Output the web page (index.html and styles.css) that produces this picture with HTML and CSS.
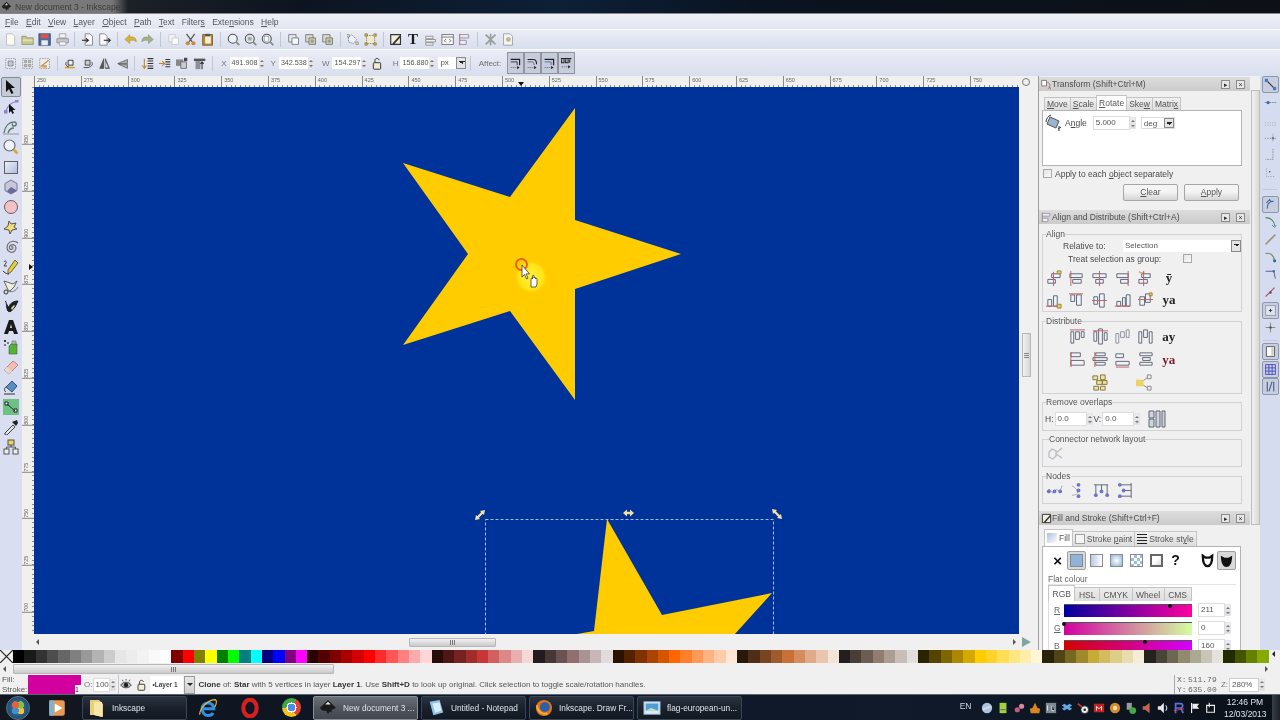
FILE: index.html
```html
<!DOCTYPE html>
<html lang="en">
<head>
  <meta charset="UTF-8">
  <title>New document 3 - Inkscape</title>
  <link rel="stylesheet" href="styles.css">
</head>
<body>
<svg class="defs" width="0" height="0">
  <!-- command bar -->
  <symbol id="new" viewBox="0 0 16 16"><path d="M3 1h7l3 3v11H3z" fill="#fbfaf4" stroke="#b9bab2"/></symbol>
  <symbol id="open" viewBox="0 0 16 16"><path d="M1 4h5l1 2h8v8H1z" fill="#c7c98c" stroke="#8d9160"/><path d="M2 8h12v2H2z" fill="#e2e3b5"/></symbol>
  <symbol id="save" viewBox="0 0 16 16"><rect x="1" y="1" width="14" height="14" fill="#4a6d9c" stroke="#2f4b72"/><rect x="3" y="1.500" width="10" height="5" fill="#d9534f"/><rect x="4" y="9" width="8" height="6" fill="#e9edf2"/></symbol>
  <symbol id="print" viewBox="0 0 16 16"><path d="M4 1h8v5H4z" fill="#f5f5f5" stroke="#999"/><path d="M1 7h14v5H1z" fill="#c6c9d2" stroke="#888"/><path d="M4 11h8v4H4z" fill="#fff" stroke="#999"/></symbol>
  <symbol id="imp" viewBox="0 0 16 16"><path d="M5 1h6l3 3v11H5z" fill="#fafafa" stroke="#777"/><path d="M1 9h7M6 6.500 9 9l-3 2.500" fill="none" stroke="#222" stroke-width="1.300"/></symbol>
  <symbol id="exp" viewBox="0 0 16 16"><path d="M2 1h6l3 3v11H2z" fill="#fafafa" stroke="#777"/><path d="M7 9h8M12.500 6.500 15 9l-2.500 2.500" fill="none" stroke="#222" stroke-width="1.300"/></symbol>
  <symbol id="undo" viewBox="0 0 16 16"><path d="M1 8l6-6v3h3c4 0 5 3 5 6-2-2-3-2-5-2H7v4z" fill="#d8b43a" stroke="#a08228" stroke-width=".6"/></symbol>
  <symbol id="redo" viewBox="0 0 16 16"><path d="M15 8L9 2v3H6C2 5 1 8 1 11c2-2 3-2 5-2h3v4z" fill="#a3b08a" stroke="#7e8a6a" stroke-width=".6"/></symbol>
  <symbol id="copy" viewBox="0 0 16 16"><path d="M2 2h8v9H2z" fill="#f4f5f8" stroke="#c3c5cc"/><path d="M6 6h8v8H6z" fill="#fafafa" stroke="#c3c5cc"/></symbol>
  <symbol id="cut" viewBox="0 0 16 16"><path d="M3 1l7 10M13 1L6 11" stroke="#55585c" stroke-width="1.500"/><circle cx="4.500" cy="12.500" r="2.500" fill="#c8893c"/><circle cx="11.500" cy="12.500" r="2.500" fill="#c8893c"/></symbol>
  <symbol id="paste" viewBox="0 0 16 16"><rect x="2" y="2" width="12" height="13" fill="#b78b3a" stroke="#70561f"/><rect x="5" y="4" width="7" height="9" fill="#f4efd8"/><rect x="5" y="1" width="6" height="3" fill="#555"/></symbol>
  <symbol id="zoom1" viewBox="0 0 16 16"><circle cx="7" cy="7" r="5.500" fill="#eef1f6" stroke="#4c4f57" stroke-width="1.300"/><path d="M11 11l4 4" stroke="#888c73" stroke-width="2"/></symbol>
  <symbol id="zoom2" viewBox="0 0 16 16"><circle cx="7" cy="7" r="5.500" fill="#dfe3e4" stroke="#4c4f57" stroke-width="1.300"/><circle cx="7" cy="7" r="2.500" fill="#a8a8a0"/><path d="M11 11l4 4" stroke="#888c73" stroke-width="2"/></symbol>
  <symbol id="zoom3" viewBox="0 0 16 16"><circle cx="7" cy="7" r="5.500" fill="#dfe3ea" stroke="#4c4f57" stroke-width="1.300"/><rect x="4" y="4" width="5" height="6" fill="#fff" stroke="#8a8fa0" stroke-width=".7"/><path d="M11 11l4 4" stroke="#888c73" stroke-width="2"/></symbol>
  <symbol id="dup" viewBox="0 0 16 16"><path d="M2 2h9v9H2z" fill="#e9ebf2" stroke="#6b6e75"/><path d="M6 6h8v8H6z" fill="#f6f7fa" stroke="#6b6e75"/></symbol>
  <symbol id="clone" viewBox="0 0 16 16"><path d="M2 2h9v9H2z" fill="#d9ddd0" stroke="#6b6e65"/><path d="M6 6h8v8H6z" fill="#cfd3bd" stroke="#6b6e65"/><path d="M8 8h4v4H8z" fill="#9da17f"/></symbol>
  <symbol id="group" viewBox="0 0 16 16"><path d="M3 5l4-3 6 6-4 5-6-2z" fill="#eef0f6" stroke="#7a7d88" stroke-dasharray="2 1"/><path d="M1 2h3v3H1zM12 11h3v3h-3z" fill="#e4e8c8" stroke="#6c6e5c" stroke-width=".7"/></symbol>
  <symbol id="ungroup" viewBox="0 0 16 16"><path d="M3 3h10v10H3z" fill="#efe9c7" stroke="#8b8560" stroke-dasharray="2 1"/><path d="M1 1h3v3H1zM12 12h3v3h-3zM12 1h3v3h-3zM1 12h3v3H1z" fill="#d5b64f" stroke="#74662d" stroke-width=".7"/></symbol>
  <symbol id="fillstroke" viewBox="0 0 16 16"><path d="M2 2h12v12H2z" fill="#f4efd9" stroke="#333" stroke-width="1.400"/><path d="M4 13L13 3l1.500 1.500L6 14z" fill="#333"/></symbol>
  <symbol id="layers" viewBox="0 0 16 16"><path d="M2 4h9v3H2zM2 8h12v3H2zM2 12h9v3H2z" fill="#eef0f6" stroke="#888"/></symbol>
  <symbol id="xml" viewBox="0 0 16 16"><rect x="1" y="2" width="14" height="12" fill="#f8f8f8" stroke="#666"/><path d="M1 5h14" stroke="#666"/><path d="M6 7.500L4 9.500l2 2M10 7.500l2 2-2 2" fill="none" stroke="#555"/></symbol>
  <symbol id="align" viewBox="0 0 16 16"><path d="M2 1v14" stroke="#c0687a" stroke-width="1.300"/><path d="M2 2h11v4H2zM2 9h8v5H2z" fill="#eceef5" stroke="#8a7f90"/></symbol>
  <symbol id="prefs" viewBox="0 0 16 16"><path d="M2 2l12 12M14 2L2 14M8 1v14" stroke="#9aa0a0" stroke-width="2.200"/></symbol>
  <symbol id="docprefs" viewBox="0 0 16 16"><path d="M3 1h8l3 3v11H3z" fill="#f5f5f2" stroke="#999"/><circle cx="9" cy="8" r="3" fill="#b8bb9c"/></symbol>
  <!-- control bar -->
  <symbol id="selall" viewBox="0 0 16 16"><path d="M2 2h12v12H2z" fill="#e9ecf6" stroke="#8e93a0" stroke-dasharray="2 1"/><path d="M5 5h6v6H5z" fill="#c5c9d6" stroke="#777"/></symbol>
  <symbol id="selall2" viewBox="0 0 16 16"><path d="M2 2h12v12H2z" fill="#eceef3" stroke="#8e93a0" stroke-dasharray="2 1"/><path d="M4 4h3v3H4zM9 4h3v3H9zM4 9h3v3H4zM9 9h3v3H9z" fill="#bbb" stroke="#777" stroke-width=".6"/></symbol>
  <symbol id="desel" viewBox="0 0 16 16"><path d="M2 2h12v12H2z" fill="#eee" stroke="#9a938a" stroke-dasharray="2 1"/><path d="M3 12l10-8" stroke="#c8884a" stroke-width="1.400"/><path d="M5 10h6v3H5z" fill="#d8a24e"/></symbol>
  <symbol id="rotl" viewBox="0 0 16 16"><path d="M5 4h6v6H5z" fill="#eee" stroke="#222"/><path d="M1 13h12" stroke="#d8a520" stroke-width="2"/><path d="M3 6c-2 3 0 6 3 6" fill="none" stroke="#222"/></symbol>
  <symbol id="rotr" viewBox="0 0 16 16"><path d="M5 4h6v6H5z" fill="#ccc" stroke="#333"/><path d="M13 6c2 3 0 6-3 6M3 13h7" fill="none" stroke="#333"/></symbol>
  <symbol id="fliph" viewBox="0 0 16 16"><path d="M7 2v12L2 14zM9 2v12l5 0z" fill="#555" stroke="#333" stroke-width=".6"/><path d="M9 5v8l3.500 0z" fill="#ddd"/></symbol>
  <symbol id="flipv" viewBox="0 0 16 16"><path d="M14 3v5L2 8zM14 9v5L3 9z" fill="#aaa" stroke="#444" stroke-width=".7"/></symbol>
  <symbol id="raise1" viewBox="0 0 16 16"><path d="M4 2v11M1.500 10.500 4 14l2.500-3.500" fill="none" stroke="#c08a20" stroke-width="1.300"/><path d="M8 2h7M8 5h7M8 8h7M8 11h7M8 14h7" stroke="#333" stroke-width="1.300"/></symbol>
  <symbol id="raise2" viewBox="0 0 16 16"><path d="M1 8h7M5 5l3 3-3 3" fill="none" stroke="#c08a20" stroke-width="1.300"/><path d="M9 3h6M9 6h6M9 9h6M9 12h6" stroke="#333" stroke-width="1.300"/></symbol>
  <symbol id="raise3" viewBox="0 0 16 16"><path d="M1 3h9v8H1z" fill="#888"/><path d="M7 6h7v8H7z" fill="#c8ccd6" stroke="#666"/><path d="M11 1h4v4h-4z" fill="#444"/></symbol>
  <symbol id="raise4" viewBox="0 0 16 16"><path d="M1 2h14v3H1z" fill="#555"/><path d="M3 5h6v10H3z" fill="#8c8f98"/><path d="M11 6v9M9 8.500l2-2.500 2 2.500" fill="none" stroke="#333" stroke-width="1.300"/></symbol>
  <symbol id="lock" viewBox="0 0 16 16"><rect x="4" y="7" width="9" height="8" rx="1" fill="#f2ecd0" stroke="#333" stroke-width="1.200"/><path d="M6 7V4c0-3 5-3 5 0" fill="none" stroke="#333" stroke-width="1.200"/></symbol>
  <symbol id="aff1" viewBox="0 0 16 16"><path d="M2 3h11v7" fill="none" stroke="#222" stroke-width="1.500"/><path d="M2 6h8v4" fill="none" stroke="#222" stroke-width="1"/><path d="M2 13h8" stroke="#666" stroke-dasharray="1.500 1"/><path d="M10 11l3 2-3 2z" fill="#222"/></symbol>
  <symbol id="aff2" viewBox="0 0 16 16"><path d="M2 3h7c3 0 4 2 4 6" fill="none" stroke="#222" stroke-width="1.300"/><path d="M2 6h5c2 0 3 1 3 4" fill="none" stroke="#555"/><path d="M2 13h8" stroke="#666" stroke-dasharray="1.500 1"/><path d="M10 11l3 2-3 2z" fill="#222"/></symbol>
  <symbol id="aff3" viewBox="0 0 16 16"><path d="M2 3h11v7" fill="none" stroke="#222" stroke-width="1.500"/><path d="M2 6h8v4" fill="none" stroke="#3b6b8f"/><path d="M2 13h8" stroke="#3b6b8f" stroke-dasharray="1.500 1"/><path d="M10 11l3 2-3 2z" fill="#222"/></symbol>
  <symbol id="aff4" viewBox="0 0 16 16"><path d="M1 2h13" stroke="#222" stroke-width="1.500"/><path d="M2 3v4h3V3M7 3v4h3V3M12 3v4" fill="none" stroke="#222" stroke-width="1.300"/><path d="M2 12h8" stroke="#666" stroke-dasharray="1.500 1"/><path d="M10 10l3 2-3 2z" fill="#222"/></symbol>
  <!-- toolbox -->
  <symbol id="t-sel" viewBox="0 0 16 16"><path d="M3 1v12l3-3 2.500 5 2-1-2.500-5h4z" fill="#111"/></symbol>
  <symbol id="t-node" viewBox="0 0 16 16"><path d="M3 12c2-6 5-8 11-10" fill="none" stroke="#8d84c8" stroke-width="1.300"/><rect x="1" y="11" width="3.500" height="3.500" fill="#8d84c8"/><rect x="12" y="1" width="3.500" height="2.500" fill="#8d84c8"/><path d="M6 5v9l2-2 1.500 3 1.500-1-1.500-3h3z" fill="#111"/></symbol>
  <symbol id="t-tweak" viewBox="0 0 16 16"><path d="M1 14c1-7 5-11 10-11 3 0 3 4 0 4-2 0-2-2-1-2M5 14c1-3 3-5 6-5" fill="none" stroke="#5e7a6c" stroke-width="1.400"/><path d="M0 15h16" stroke="#b6bac8" stroke-width="2"/></symbol>
  <symbol id="t-zoom" viewBox="0 0 16 16"><circle cx="6.500" cy="6.500" r="5.500" fill="#eef3fa" stroke="#666b75" stroke-width="1.200"/><path d="M10.500 10.500l4 4" stroke="#d8a93c" stroke-width="2.600"/></symbol>
  <symbol id="t-rect" viewBox="0 0 16 16"><defs><linearGradient id="gr" x1="0" y1="0" x2="1" y2="1"><stop offset="0" stop-color="#eef2fa"/><stop offset="1" stop-color="#aebbd8"/></linearGradient></defs><rect x="1.500" y="2.500" width="13" height="12" fill="url(#gr)" stroke="#5c6068"/></symbol>
  <symbol id="t-3d" viewBox="0 0 16 16"><path d="M8 1l6 3.500v7L8 15l-6-3.500v-7z" fill="#c9c7da" stroke="#77778c"/><path d="M8 8l6 3.500L8 15l-4-3z" fill="#6b6a9c"/></symbol>
  <symbol id="t-circ" viewBox="0 0 16 16"><circle cx="8" cy="8" r="6.500" fill="#f5c1c8" stroke="#6a5c60"/></symbol>
  <symbol id="t-star" viewBox="0 0 16 16"><path d="M6 2l2 3 5-1-2 4 3 2-5 1-2 4-1-4-5-1 4-3z" fill="#f3dc80" stroke="#55564a"/></symbol>
  <symbol id="t-spiral" viewBox="0 0 16 16"><path d="M8 8c1-1 2 0 2 1s-2 2-3 1-1-3 1-4 5 0 5 3-3 5-6 4-4-5-2-8 7-4 10-1" fill="none" stroke="#666" stroke-width="1.100"/></symbol>
  <symbol id="t-pencil" viewBox="0 0 16 16"><path d="M1 3c1-2 3-1 2 1L1 7h3" fill="none" stroke="#444"/><path d="M12 1l3 3-7 9-3 2 0-4z" fill="#e8d030" stroke="#333" stroke-width=".7"/><path d="M0 12c3 3 5 3 6 3" fill="none" stroke="#333"/></symbol>
  <symbol id="t-pen" viewBox="0 0 16 16"><path d="M1 2l9 3 4-3-3 6-4 4-2-1z" fill="#eef0da" stroke="#444" stroke-width=".8"/><circle cx="3" cy="13" r="2" fill="none" stroke="#333"/><path d="M5 12c4 2 8 0 10-4" fill="none" stroke="#777"/></symbol>
  <symbol id="t-callig" viewBox="0 0 16 16"><path d="M2 2c2 0 1 8 3 10 3 2 4-1 7-4l3-6c-4 0-8 2-9 6" fill="#1f2024" stroke="#1f2024"/><path d="M8 9l3-3 1 1-3 4z" fill="#e3dc8e"/></symbol>
  <symbol id="t-text" viewBox="0 0 16 16"><path d="M6 1h4l5 14h-4l-1-3H6l-1 3H1zm2 4l-1 4h2z" fill="#1a1a1a" fill-rule="evenodd"/></symbol>
  <symbol id="t-spray" viewBox="0 0 16 16"><path d="M8 5h6v10H6V7z" fill="#55b13a" stroke="#3b6a2a" stroke-width=".6"/><path d="M9 2h4v3H9z" fill="#bbb" stroke="#666" stroke-width=".6"/><circle cx="2" cy="2" r="1"/><circle cx="5" cy="4" r=".8"/><circle cx="2" cy="6" r=".8"/></symbol>
  <symbol id="t-erase" viewBox="0 0 16 16"><path d="M1 11L10 2l5 4-9 9z" fill="#f3bdb0" stroke="#b48a84"/><path d="M1 11l5 4 3-3-5-4z" fill="#ead6d0"/></symbol>
  <symbol id="t-bucket" viewBox="0 0 16 16"><path d="M3 8l6-6 5 5-5 6z" fill="#5b8fc2" stroke="#2f5273"/><path d="M1 15h11" stroke="#333"/><path d="M3 8c-2 1-2 4 0 5" fill="none" stroke="#333"/></symbol>
  <symbol id="t-grad" viewBox="0 0 16 16"><rect width="16" height="16" fill="#6fc083"/><path d="M2 3h3v3H2zM11 10h3v3h-3z" fill="#eef4ee" stroke="#223"/><path d="M4 5l8 7" stroke="#223"/></symbol>
  <symbol id="t-drop" viewBox="0 0 16 16"><path d="M2 14l8-8 2 2-8 8-2 0z" fill="#dfe2ec" stroke="#444"/><path d="M9 3l4 4 2-3-1-3z" fill="#222"/></symbol>
  <symbol id="t-conn" viewBox="0 0 16 16"><rect x="5" y="1" width="6" height="5" fill="#e8d36c" stroke="#55523a"/><rect x="1" y="10" width="5" height="5" fill="#eee" stroke="#555"/><rect x="10" y="10" width="5" height="5" fill="#eee" stroke="#555"/><path d="M3.500 10V8h9v2M8 6v2" fill="none" stroke="#555"/></symbol>
  <!-- dock -->
  <symbol id="dock-tr" viewBox="0 0 16 16"><path d="M1 2h7v8H1z" fill="#fff" stroke="#555"/><path d="M9 5c3 0 5 3 3 7M10 14l3-2 1 3" fill="none" stroke="#a05050"/></symbol>
  <symbol id="angle" viewBox="0 0 18 18"><path d="M5 3l9 4-3 7-9-4z" fill="#9bb2d0" stroke="#555"/><path d="M1 8c0-3 2-6 5-7M13 15l3-2M14 12v5" fill="none" stroke="#333"/></symbol>
  <symbol id="al-hl" viewBox="0 0 18 18"><path d="M3 10h8v4H3z" fill="#eef1f7" stroke="#5e6472"/><path d="M7 4h9v4H7z" fill="#eef1f7" stroke="#5e6472"/><path d="M9 2v15" stroke="#c45a66"/><path d="M13 1h4v3h-4z" fill="#e8d070" stroke="#9a7f30"/></symbol>
  <symbol id="al-hc" viewBox="0 0 18 18"><path d="M2 4h13v4H2zM5 10h9v4H5z" fill="#eef1f7" stroke="#5e6472"/><path d="M3 1v16" stroke="#c45a66"/></symbol>
  <symbol id="al-hm" viewBox="0 0 18 18"><path d="M2 4h14v4H2zM5 10h8v4H5z" fill="#eef1f7" stroke="#5e6472"/><path d="M9 1v16" stroke="#c45a66"/></symbol>
  <symbol id="al-hr" viewBox="0 0 18 18"><path d="M3 4h12v4H3zM7 10h8v4H7z" fill="#eef1f7" stroke="#5e6472"/><path d="M15 1v16" stroke="#c45a66"/></symbol>
  <symbol id="al-hy" viewBox="0 0 18 18"><path d="M2 10h9v4H2z" fill="#eef1f7" stroke="#5e6472"/><path d="M5 4h9v4H5z" fill="#eef1f7" stroke="#5e6472"/><path d="M3 1v2h5" fill="none" stroke="#c8953c"/><path d="M7 1v16" stroke="#c45a66"/></symbol>
  <symbol id="al-vb" viewBox="0 0 18 18"><path d="M3 8h4v7H3zM9 4h4v11H9z" fill="#eef1f7" stroke="#5e6472"/><path d="M1 15h15" stroke="#c45a66"/><path d="M13 13h4v4h-4z" fill="#e8d070" stroke="#9a7f30"/></symbol>
  <symbol id="al-vt" viewBox="0 0 18 18"><path d="M3 3h4v7H3zM9 3h5v11H9z" fill="#eef1f7" stroke="#5e6472"/><path d="M1 2h15" stroke="#c45a66"/></symbol>
  <symbol id="al-vm" viewBox="0 0 18 18"><path d="M3 5h4v8H3zM9 2h5v14H9z" fill="#eef1f7" stroke="#5e6472"/><path d="M1 9h16" stroke="#c45a66"/></symbol>
  <symbol id="al-vs" viewBox="0 0 18 18"><path d="M3 10h4v5H3zM9 6h3v9H9zM13 3h4v12h-4z" fill="#eef1f7" stroke="#5e6472"/><path d="M1 15h16" stroke="#c45a66"/></symbol>
  <symbol id="al-vy" viewBox="0 0 18 18"><path d="M3 5h5v9H3zM9 2h5v9H9z" fill="#eef1f7" stroke="#5e6472"/><path d="M1 8h16" stroke="#c45a66"/><path d="M13 1h3v3h-3z" fill="#e8d070" stroke="#9a7f30"/></symbol>
  <symbol id="di-1" viewBox="0 0 18 18"><path d="M2 4h3v12H2zM7 4h4v8H7zM13 4h3v6h-3z" fill="#f2f3f6" stroke="#5e6472"/><path d="M1 2h16" stroke="#c45a66"/></symbol>
  <symbol id="di-2" viewBox="0 0 18 18"><path d="M2 4h3v10H2zM7 1h4v16H7zM13 5h3v8h-3z" fill="#f2f3f6" stroke="#5e6472"/><path d="M1 3h16" stroke="#c45a66"/></symbol>
  <symbol id="di-3" viewBox="0 0 18 18"><path d="M2 6h3v10H2zM7 4h4v6H7zM13 2h3v8h-3z" fill="#f2f3f6" stroke="#8a8f9b"/></symbol>
  <symbol id="di-4" viewBox="0 0 18 18"><path d="M2 4h3v12H2zM7 2h4v8H7zM13 4h3v12h-3z" fill="#f2f3f6" stroke="#5e6472"/></symbol>
  <symbol id="di-5" viewBox="0 0 18 18"><path d="M2 2h10v4H2zM2 10h14v5H2z" fill="#f2f3f6" stroke="#5e6472"/><path d="M2 1v16" stroke="#c45a66"/></symbol>
  <symbol id="di-6" viewBox="0 0 18 18"><path d="M4 2h10v3H4zM1 7h15v3H1zM4 12h10v3H4z" fill="#f2f3f6" stroke="#5e6472"/><path d="M3 1v16" stroke="#c45a66"/></symbol>
  <symbol id="di-7" viewBox="0 0 18 18"><path d="M2 3h8v4H2zM2 11h14v4H2z" fill="#f2f3f6" stroke="#5e6472"/><path d="M2 17h14" stroke="#c45a66"/></symbol>
  <symbol id="di-8" viewBox="0 0 18 18"><path d="M3 2h13v3H3zM6 7h8v3H6zM3 12h13v3H3z" fill="#f2f3f6" stroke="#5e6472"/></symbol>
  <symbol id="di-9" viewBox="0 0 18 18"><path d="M2 2h5v4H2zM10 1h5v5h-5zM6 7h6v4H6zM12 7h5v4h-5zM3 13h5v4H3zM10 13h5v4h-5z" fill="#f0e2a0" stroke="#7f7640"/></symbol>
  <symbol id="di-10" viewBox="0 0 18 18"><path d="M1 6h8v7H1z" fill="#ecd262"/><path d="M9 7l5-4M9 12l5 3" stroke="#8a8a80"/><path d="M13 1h4v4h-4zM13 13h4v4h-4z" fill="#eee" stroke="#888"/></symbol>
  <symbol id="ovl" viewBox="0 0 18 18"><path d="M1 1h5v7H1zM1 9h5v8H1zM8 1h4v16H8zM14 1h3v16h-3z" fill="#cfd4e0" stroke="#5e6472"/></symbol>
  <symbol id="netw" viewBox="0 0 18 18"><path d="M3 7l3-3 4 2v5l-3 3-4-2zM10 8l6-5M10 9l6 4" fill="none" stroke="#bcbcc6" stroke-width="1.300"/></symbol>
  <symbol id="n1" viewBox="0 0 18 18"><path d="M1 10c4-7 5 6 8 0s5 5 8-6" fill="none" stroke="#999"/><circle cx="3" cy="10" r="2" fill="#6f76c8"/><circle cx="9" cy="10" r="2" fill="#6f76c8"/><circle cx="15" cy="10" r="2" fill="#6f76c8"/></symbol>
  <symbol id="n2" viewBox="0 0 18 18"><path d="M2 14c8 0 8-6 0-10" fill="none" stroke="#aaa"/><circle cx="9" cy="3" r="2" fill="#6f76c8"/><circle cx="9" cy="9" r="2" fill="#6f76c8"/><circle cx="9" cy="15" r="2" fill="#6f76c8"/></symbol>
  <symbol id="n3" viewBox="0 0 18 18"><path d="M1 3h15M3 3v11M9 3v7M15 3v11" fill="none" stroke="#5e6472"/><circle cx="3" cy="14" r="2" fill="#6f76c8"/><circle cx="9" cy="10" r="2" fill="#6f76c8"/><circle cx="15" cy="14" r="2" fill="#6f76c8"/></symbol>
  <symbol id="n4" viewBox="0 0 18 18"><path d="M15 1v16M3 3h12M7 9h8M3 15h12" fill="none" stroke="#5e6472"/><circle cx="3" cy="3" r="2" fill="#6f76c8"/><circle cx="7" cy="9" r="2" fill="#6f76c8"/><circle cx="3" cy="15" r="2" fill="#6f76c8"/></symbol>
  <!-- snap bar -->
  <symbol id="s1" viewBox="0 0 16 16"><path d="M3 3l10 10" stroke="#333" stroke-width="1.400"/><rect x="1" y="1" width="4" height="4" fill="#4a79b8"/><rect x="11" y="11" width="4" height="4" fill="#4a79b8"/></symbol>
  <symbol id="s2" viewBox="0 0 16 16"><path d="M1 8h14" stroke="#777" stroke-dasharray="2 1"/><circle cx="5" cy="8" r="2" fill="#3a68a8"/></symbol>
  <symbol id="s3" viewBox="0 0 16 16"><path d="M1 12h14M1 15h14" stroke="#aaa" stroke-dasharray="1.500 1.500"/></symbol>
  <symbol id="s4" viewBox="0 0 16 16"><path d="M1 9h14" stroke="#777" stroke-dasharray="1.500 1.500"/><path d="M11 3v10" stroke="#aaa"/><circle cx="11" cy="9" r="1.500" fill="#5a7ab8"/></symbol>
  <symbol id="s5" viewBox="0 0 16 16"><path d="M11 1v13H2" fill="none" stroke="#888" stroke-dasharray="2 1"/></symbol>
  <symbol id="s6" viewBox="0 0 16 16"><path d="M3 3v10h10" fill="none" stroke="#999" stroke-dasharray="1.500 1.500"/><circle cx="7" cy="7" r="1" fill="#444"/></symbol>
  <symbol id="s7" viewBox="0 0 16 16"><path d="M4 13c0-6 3-9 8-9M3 6l4-4 2 3" fill="none" stroke="#3a68a8" stroke-width="1.400"/></symbol>
  <symbol id="s8" viewBox="0 0 16 16"><path d="M2 2c6 0 11 4 11 10" fill="none" stroke="#4a8a50" stroke-width="1.300"/><path d="M10 11l3 3 2-3" fill="none" stroke="#3a68a8"/></symbol>
  <symbol id="s9" viewBox="0 0 16 16"><path d="M2 14L14 2" stroke="#9a9a7a" stroke-width="2"/></symbol>
  <symbol id="s10" viewBox="0 0 16 16"><path d="M2 3c6-1 10 2 11 9" fill="none" stroke="#5a8a50" stroke-width="1.400"/><circle cx="13" cy="12" r="2" fill="#3a68a8"/></symbol>
  <symbol id="s11" viewBox="0 0 16 16"><path d="M2 4h10l2 9" fill="none" stroke="#447"/><circle cx="12" cy="4" r="1.500" fill="#3a68a8"/></symbol>
  <symbol id="s12" viewBox="0 0 16 16"><path d="M2 13L13 2" stroke="#b06060" stroke-width="1.600"/><circle cx="8" cy="8" r="1.500" fill="#555"/></symbol>
  <symbol id="s13" viewBox="0 0 16 16"><rect x="2" y="2" width="12" height="12" fill="#dde3f0" stroke="#8e96a8"/><path d="M8 6v4M6 8h4" stroke="#222"/></symbol>
  <symbol id="s14" viewBox="0 0 16 16"><path d="M2 8h12M8 2v12" stroke="#777"/><circle cx="8" cy="8" r="1.500" fill="#555"/></symbol>
  <symbol id="s15" viewBox="0 0 16 16"><path d="M3 2h10v12H3z" fill="#fff" stroke="#444"/><path d="M9 3h3v10H9z" fill="#ccc"/></symbol>
  <symbol id="s16" viewBox="0 0 16 16"><path d="M2 2h12v12H2zM2 6h12M2 10h12M6 2v12M10 2v12" fill="none" stroke="#3a3ac0"/></symbol>
  <symbol id="s17" viewBox="0 0 16 16"><path d="M4 2v12M12 2v12M6 14L10 2" fill="none" stroke="#445a80" stroke-width="1.300"/></symbol>
</svg>

<div class="app">
  <div class="titlebar">
    <svg class="title-ico" viewBox="0 0 16 16"><path d="M8 1l7 7-4 2v3l-2-1-1 2-2-3H3L1 8z" fill="#222"/><path d="M6 6l2-3 2 3z" fill="#ddd"/></svg>
    <span>New document 3 - Inkscape</span>
  </div>

  <div class="menubar">
    <span><u>F</u>ile</span><span><u>E</u>dit</span><span><u>V</u>iew</span><span><u>L</u>ayer</span><span><u>O</u>bject</span><span><u>P</u>ath</span><span><u>T</u>ext</span><span>Filter<u>s</u></span><span>Exte<u>n</u>sions</span><span><u>H</u>elp</span>
  </div>

  <div class="cmdbar">
    <svg class="ic"><use href="#new"/></svg><svg class="ic"><use href="#open"/></svg><svg class="ic"><use href="#save"/></svg><svg class="ic"><use href="#print"/></svg>
    <i class="sep"></i>
    <svg class="ic"><use href="#imp"/></svg><svg class="ic"><use href="#exp"/></svg>
    <i class="sep"></i>
    <svg class="ic"><use href="#undo"/></svg><svg class="ic"><use href="#redo"/></svg>
    <i class="sep"></i>
    <svg class="ic"><use href="#copy"/></svg><svg class="ic"><use href="#cut"/></svg><svg class="ic"><use href="#paste"/></svg>
    <i class="sep"></i>
    <svg class="ic"><use href="#zoom1"/></svg><svg class="ic"><use href="#zoom2"/></svg><svg class="ic"><use href="#zoom3"/></svg>
    <i class="sep"></i>
    <svg class="ic"><use href="#dup"/></svg><svg class="ic"><use href="#clone"/></svg><svg class="ic"><use href="#clone"/></svg>
    <i class="sep"></i>
    <svg class="ic"><use href="#group"/></svg><svg class="ic"><use href="#ungroup"/></svg>
    <i class="sep"></i>
    <svg class="ic"><use href="#fillstroke"/></svg><span class="big-t">T</span><svg class="ic"><use href="#layers"/></svg><svg class="ic"><use href="#xml"/></svg><svg class="ic"><use href="#align"/></svg>
    <i class="sep"></i>
    <svg class="ic"><use href="#prefs"/></svg><svg class="ic"><use href="#docprefs"/></svg>
  </div>

  <div class="ctrlbar">
    <svg class="ic"><use href="#selall"/></svg><svg class="ic"><use href="#selall2"/></svg><svg class="ic"><use href="#desel"/></svg>
    <i class="sep"></i>
    <svg class="ic"><use href="#rotl"/></svg><svg class="ic"><use href="#rotr"/></svg><svg class="ic"><use href="#fliph"/></svg><svg class="ic"><use href="#flipv"/></svg>
    <i class="sep"></i>
    <svg class="ic"><use href="#raise1"/></svg><svg class="ic"><use href="#raise2"/></svg><svg class="ic"><use href="#raise3"/></svg><svg class="ic"><use href="#raise4"/></svg>
    <i class="sep"></i>
    <label class="coord x-label">X</label><span class="num w30">491.908</span><span class="spin"></span>
    <label class="coord y-label">Y</label><span class="num w30">342.538</span><span class="spin"></span>
    <label class="coord w-label">W</label><span class="num w30">154.297</span><span class="spin"></span>
    <svg class="ic lock"><use href="#lock"/></svg>
    <label class="coord h-label">H</label><span class="num w30">156.880</span><span class="spin"></span>
    <span class="select px"><em>px</em><b class="arrow"></b></span>
    <i class="sep"></i>
    <span class="affect">Affect:</span>
    <span class="toggle"><svg class="ic"><use href="#aff1"/></svg></span><span class="toggle"><svg class="ic"><use href="#aff2"/></svg></span><span class="toggle"><svg class="ic"><use href="#aff3"/></svg></span><span class="toggle"><svg class="ic"><use href="#aff4"/></svg></span>
  </div>

  <div class="main">
    <div class="tools">
      <span class="tool active"><svg><use href="#t-sel"/></svg></span>
      <span class="tool"><svg><use href="#t-node"/></svg></span>
      <span class="tool"><svg><use href="#t-tweak"/></svg></span>
      <span class="tool"><svg><use href="#t-zoom"/></svg></span>
      <span class="tool"><svg><use href="#t-rect"/></svg></span>
      <span class="tool"><svg><use href="#t-3d"/></svg></span>
      <span class="tool"><svg><use href="#t-circ"/></svg></span>
      <span class="tool"><svg><use href="#t-star"/></svg></span>
      <span class="tool"><svg><use href="#t-spiral"/></svg></span>
      <span class="tool"><svg><use href="#t-pencil"/></svg></span>
      <span class="tool"><svg><use href="#t-pen"/></svg></span>
      <span class="tool"><svg><use href="#t-callig"/></svg></span>
      <span class="tool"><svg><use href="#t-text"/></svg></span>
      <span class="tool"><svg><use href="#t-spray"/></svg></span>
      <span class="tool"><svg><use href="#t-erase"/></svg></span>
      <span class="tool"><svg><use href="#t-bucket"/></svg></span>
      <span class="tool"><svg><use href="#t-grad"/></svg></span>
      <span class="tool"><svg><use href="#t-drop"/></svg></span>
      <span class="tool"><svg><use href="#t-conn"/></svg></span>
    </div>

    <div class="workspace">
      <div class="corner"></div>
      <div class="ruler-h">
        <span>250</span><span>275</span><span>300</span><span>325</span><span>350</span><span>375</span><span>400</span><span>425</span><span>450</span><span>475</span><span>500</span><span>525</span><span>550</span><span>575</span><span>600</span><span>625</span><span>650</span><span>675</span><span>700</span><span>725</span><span>750</span>
        <i class="mark-h"></i>
      </div>
      <div class="vscroll-top"><b></b></div>
      <div class="ruler-v">
        <span>950</span><span>925</span><span>900</span><span>875</span><span>850</span><span>825</span><span>800</span><span>775</span><span>750</span><span>725</span><span>700</span>
        <i class="mark-v"></i>
      </div>
      <div class="canvas">
        <svg class="page" viewBox="34 87 985 547" width="985" height="547">
          <defs>
            <radialGradient id="glow"><stop offset="0" stop-color="#fff23c"/><stop offset=".75" stop-color="#ffe619" stop-opacity=".9"/><stop offset="1" stop-color="#ffcc00" stop-opacity="0"/></radialGradient>
          </defs>
          <polygon fill="#ffcc00" points="575,108 575,220 681,254 575,289 575,400 510,311 403,345 468,254 403,163 510,197"/>
          <polygon fill="#ffcc00" points="607,519 662,615 772,593 725,645 560,645 560,637 594,631"/>
          <rect x="485.500" y="519.500" width="288" height="130" fill="none" stroke="#a9bcdf" stroke-dasharray="3 2"/>
          <g fill="none" stroke="#f5e0a4" stroke-width="2.400">
            <path d="M477 518l6-6"/>
            <path d="M625 513h7"/>
            <path d="M774 511l6 6"/>
          </g>
          <g fill="#f5e0a4">
            <path d="M475 520l1-5 4 4zM485 510l-5 1 4 4z"/>
            <path d="M623 513l4-3.500v7zM634 513l-4-3.500v7z"/>
            <path d="M772 509l5 1-4 4zM782 519l-1-5-4 4z"/>
          </g>
          <circle cx="531" cy="277" r="17" fill="url(#glow)"/>
          <circle cx="521.500" cy="264.500" r="5.500" fill="none" stroke="#e2631a" stroke-width="2"/>
          <path d="M522 265v12l2.500-2.500 2 4.500 1.500-.8-2-4.300h3.500z" fill="#fff" stroke="#222" stroke-width=".7"/>
          <path d="M531 284v-5c0-1 1.500-1 1.500 0v-3c0-1 1.500-1 1.500 0v2c0-1 1.500-1 1.500 0v1c0-1 1.500-1 1.500 0v5l-1 3h-5z" fill="#fff" stroke="#222" stroke-width=".7"/>
        </svg>
      </div>
      <div class="vscroll"><b></b></div>
      <div class="hscroll-corner"></div>
      <div class="hscroll">
        <i class="arr-l"></i><b class="thumb"><em></em></b><i class="arr-r"></i>
      </div>
      <div class="cms"><svg viewBox="0 0 12 12"><path d="M2 1l9 5-9 5z" fill="#7fa6a0"/></svg></div>
    </div>

    <div class="dock">
      <div class="dock-inner">
        <div class="dock-head"><svg class="head-ic"><use href="#dock-tr"/></svg><span>Transform (Shift+Ctrl+M)</span><i class="hbtn">▸</i><i class="hbtn">×</i></div>
        <div class="tabs tr-tabs"><span><u>M</u>ove</span><span><u>S</u>cale</span><span class="on"><u>R</u>otate</span><span>Ske<u>w</u></span><span>Matri<u>x</u></span></div>
        <div class="note tr-note">
          <div class="row"><svg class="dic"><use href="#angle"/></svg><span class="lbl">A<u>n</u>gle</span><span class="num w36">5.000</span><span class="spin"></span><span class="select deg"><em>deg</em><b class="arrow"></b></span></div>
        </div>
        <div class="check-row"><i class="check"></i><span>Apply to each <u>o</u>bject separately</span></div>
        <div class="btn-row"><span class="btn"><u>C</u>lear</span><span class="btn"><u>A</u>pply</span></div>

        <div class="dock-head head-2"><svg class="head-ic"><use href="#align"/></svg><span>Align and Distribute (Shift+Ctrl+A)</span><i class="hbtn">▸</i><i class="hbtn">×</i></div>
        <fieldset class="frame f-align">
          <legend>Align</legend>
          <div class="rel-row"><span>Relative to:</span><span class="select rel"><em>Selection</em><b class="arrow"></b></span></div>
          <div class="treat-row"><span>Treat selection as group:</span><i class="check"></i></div>
          <div class="grid6">
            <svg><use href="#al-hl"/></svg><svg><use href="#al-hc"/></svg><svg><use href="#al-hm"/></svg><svg><use href="#al-hr"/></svg><svg><use href="#al-hy"/></svg><b class="gly">ȳ</b>
            <svg><use href="#al-vb"/></svg><svg><use href="#al-vt"/></svg><svg><use href="#al-vm"/></svg><svg><use href="#al-vs"/></svg><svg><use href="#al-vy"/></svg><b class="gly">ya</b>
          </div>
        </fieldset>
        <fieldset class="frame f-dist">
          <legend>Distribute</legend>
          <div class="grid5">
            <svg><use href="#di-1"/></svg><svg><use href="#di-2"/></svg><svg><use href="#di-3"/></svg><svg><use href="#di-4"/></svg><b class="gly">ay</b>
            <svg><use href="#di-5"/></svg><svg><use href="#di-6"/></svg><svg><use href="#di-7"/></svg><svg><use href="#di-8"/></svg><b class="gly red">ya</b>
          </div>
          <div class="dist-last"><svg><use href="#di-9"/></svg><svg><use href="#di-10"/></svg></div>
        </fieldset>
        <fieldset class="frame f-over">
          <legend>Remove overlaps</legend>
          <div class="row ovl-row"><span>H:</span><span class="num w30">0.0</span><span class="spin"></span><span>V:</span><span class="num w30">0.0</span><span class="spin"></span><svg class="dic"><use href="#ovl"/></svg></div>
        </fieldset>
        <fieldset class="frame f-conn">
          <legend>Connector network layout</legend>
          <svg class="dic"><use href="#netw"/></svg>
        </fieldset>
        <fieldset class="frame f-nodes">
          <legend>Nodes</legend>
          <div class="node-row"><svg><use href="#n1"/></svg><svg><use href="#n2"/></svg><svg><use href="#n3"/></svg><svg><use href="#n4"/></svg></div>
        </fieldset>

        <div class="dock-head head-3"><svg class="head-ic"><use href="#fillstroke"/></svg><span>Fill and Stroke (Shift+Ctrl+F)</span><i class="hbtn">▸</i><i class="hbtn">×</i></div>
        <div class="tabs fs-tabs">
          <span class="on"><i class="mini fill"></i><em>Fill</em></span><span><i class="mini stroke"></i><em>Stroke <u>p</u>aint</em></span><span><i class="mini style"></i><em>Stroke st<u>y</u>le</em></span>
        </div>
        <div class="note fs-note">
          <div class="paint-row">
            <span class="p-none">×</span>
            <span class="pt sel"><i class="p-flat"></i></span>
            <span class="pt"><i class="p-lin"></i></span>
            <span class="pt"><i class="p-rad"></i></span>
            <span class="pt"><i class="p-pat"></i></span>
            <span class="pt"><i class="p-swatch"></i></span>
            <span class="p-q">?</span>
            <span class="rule-ic"><svg viewBox="0 0 16 16"><path d="M3 3c0 9 2 11 5 11s5-2 5-11l-3 2H6z" fill="none" stroke="#111" stroke-width="2.500"/></svg></span>
            <span class="rule-ic sel"><svg viewBox="0 0 16 16"><path d="M2 3c0 9 3 12 6 12s6-3 6-12l-4 2H6z" fill="#111"/></svg></span>
          </div>
          <div class="flat-title">Flat colour</div>
          <div class="tabs color-tabs"><span class="on">RGB</span><span>HSL</span><span>CMYK</span><span>Wheel</span><span>CMS</span></div>
          <div class="slider-row"><u>R</u><span class="slider s-r"><i style="left:83%"></i></span><span class="num w26">211</span><span class="spin"></span></div>
          <div class="slider-row"><u>G</u><span class="slider s-g"><i style="left:0"></i></span><span class="num w26">0</span><span class="spin"></span></div>
          <div class="slider-row"><u>B</u><span class="slider s-b"><i style="left:63%"></i></span><span class="num w26">160</span><span class="spin"></span></div>
        </div>
      </div>
      <div class="dock-scroll"><b></b></div>
    </div>

    <div class="snapbar">
      <span class="snap on"><svg><use href="#s1"/></svg></span>
      <span class="snap"><svg><use href="#s2"/></svg></span>
      <span class="snap"><svg><use href="#s3"/></svg></span>
      <span class="snap"><svg><use href="#s4"/></svg></span>
      <span class="snap"><svg><use href="#s5"/></svg></span>
      <span class="snap"><svg><use href="#s6"/></svg></span>
      <i class="snap-sep wide"></i>
      <span class="snap on"><svg><use href="#s7"/></svg></span>
      <span class="snap"><svg><use href="#s8"/></svg></span>
      <span class="snap"><svg><use href="#s9"/></svg></span>
      <span class="snap"><svg><use href="#s10"/></svg></span>
      <span class="snap"><svg><use href="#s11"/></svg></span>
      <span class="snap"><svg><use href="#s12"/></svg></span>
      <span class="snap on"><svg><use href="#s13"/></svg></span>
      <span class="snap"><svg><use href="#s14"/></svg></span>
      <i class="snap-sep"></i>
      <span class="snap on"><svg><use href="#s15"/></svg></span>
      <span class="snap on"><svg><use href="#s16"/></svg></span>
      <span class="snap on"><svg><use href="#s17"/></svg></span>
    </div>
  </div>

  <div class="palette">
    <span class="no-paint"><svg viewBox="0 0 13 13"><path d="M0 0l13 13M13 0L0 13" stroke="#222" stroke-width="1.200"/></svg></span>
    <div class="swatches">
      <i style="background:#000"></i><i style="background:#1a1a1a"></i><i style="background:#333"></i><i style="background:#4d4d4d"></i><i style="background:#666"></i><i style="background:#808080"></i><i style="background:#999"></i><i style="background:#b3b3b3"></i><i style="background:#ccc"></i><i style="background:#e6e6e6"></i><i style="background:#ececec"></i><i style="background:#f2f2f2"></i><i style="background:#f9f9f9"></i><i style="background:#fff"></i>
      <i style="background:#800000"></i><i style="background:#f00"></i><i style="background:#808000"></i><i style="background:#ff0"></i><i style="background:#008000"></i><i style="background:#0f0"></i><i style="background:#008080"></i><i style="background:#0ff"></i><i style="background:#000080"></i><i style="background:#00f"></i><i style="background:#800080"></i><i style="background:#f0f"></i>
      <i style="background:#2b0000"></i><i style="background:#500"></i><i style="background:#800000"></i><i style="background:#a00"></i><i style="background:#d40000"></i><i style="background:#f00"></i><i style="background:#ff2a2a"></i><i style="background:#f55"></i><i style="background:#ff8080"></i><i style="background:#faa"></i><i style="background:#ffd5d5"></i>
      <i style="background:#280b0b"></i><i style="background:#501616"></i><i style="background:#782121"></i><i style="background:#a02c2c"></i><i style="background:#c83737"></i><i style="background:#d35f5f"></i><i style="background:#de8787"></i><i style="background:#e9afaf"></i><i style="background:#f4d7d7"></i>
      <i style="background:#241c1c"></i><i style="background:#483737"></i><i style="background:#6c5353"></i><i style="background:#916f6f"></i><i style="background:#ac9393"></i><i style="background:#c8b7b7"></i><i style="background:#e3dbdb"></i>
      <i style="background:#2b1100"></i><i style="background:#520"></i><i style="background:#803300"></i><i style="background:#a40"></i><i style="background:#d45500"></i><i style="background:#f60"></i><i style="background:#ff7f2a"></i><i style="background:#f95"></i><i style="background:#ffb380"></i><i style="background:#fca"></i><i style="background:#ffe6d5"></i>
      <i style="background:#28170b"></i><i style="background:#502d16"></i><i style="background:#784421"></i><i style="background:#a05a2c"></i><i style="background:#c87137"></i><i style="background:#d38d5f"></i><i style="background:#deaa87"></i><i style="background:#e9c6af"></i><i style="background:#f4e3d7"></i>
      <i style="background:#241f1c"></i><i style="background:#483e37"></i><i style="background:#6c5d53"></i><i style="background:#917c6f"></i><i style="background:#ac9d93"></i><i style="background:#c8beb7"></i><i style="background:#e3dedb"></i>
      <i style="background:#2b2200"></i><i style="background:#540"></i><i style="background:#806600"></i><i style="background:#a80"></i><i style="background:#d4aa00"></i><i style="background:#fc0"></i><i style="background:#ffd42a"></i><i style="background:#fd5"></i><i style="background:#ffe680"></i><i style="background:#fea"></i><i style="background:#fff6d5"></i>
      <i style="background:#28220b"></i><i style="background:#504416"></i><i style="background:#786721"></i><i style="background:#a0892c"></i><i style="background:#c8ab37"></i><i style="background:#d3bc5f"></i><i style="background:#decd87"></i><i style="background:#e9ddaf"></i><i style="background:#f4eed7"></i>
      <i style="background:#24221c"></i><i style="background:#484537"></i><i style="background:#6c6753"></i><i style="background:#918a6f"></i><i style="background:#aca793"></i><i style="background:#c8c4b7"></i><i style="background:#e3e2db"></i>
      <i style="background:#222b00"></i><i style="background:#450"></i><i style="background:#668000"></i><i style="background:#8a0"></i>
    </div>
    <i class="pal-arrow"></i>
  </div>
  <div class="pal-scroll"><i class="arr-l"></i><b class="thumb"><em></em></b><i class="arr-r"></i></div>

  <div class="status">
    <div class="fs-labels"><span>Fill:</span><span>Stroke:</span></div>
    <div class="fs-swatch"><i class="sw-fill"></i><div class="sw-stroke"><i></i><span>1</span></div></div>
    <span class="op">O:</span><span class="num w18">100</span><span class="spin"></span>
    <i class="sep tall"></i>
    <svg class="st-ic" viewBox="0 0 16 16"><path d="M1 8c3-5 11-5 14 0-3 5-11 5-14 0z" fill="#bbb" stroke="#222"/><circle cx="8" cy="8" r="3" fill="#222"/><path d="M4 3L3 1M8 2V0M12 3l1-2" stroke="#222"/></svg>
    <svg class="st-ic" viewBox="0 0 16 16"><use href="#lock"/></svg>
    <span class="layer">•Layer 1</span><b class="layer-arrow"><s></s></b>
    <p class="msg"><b>Clone</b> of: <b>Star</b> with 5 vertices in layer <b>Layer 1</b>. Use <b>Shift+D</b> to look up original. Click selection to toggle scale/rotation handles.</p>
    <div class="coords"><span>X:</span><span class="cv">511.79</span><span>Y:</span><span class="cv">635.00</span></div>
    <span class="zlabel">Z:</span><span class="num w28">280%</span><span class="spin"></span>
  </div>

  <div class="taskbar">
    <span class="orb"></span>
    <span class="quick media"><svg viewBox="0 0 18 18"><rect x="2" y="2" width="14" height="14" rx="2" fill="#e79a55"/><rect x="2" y="2" width="4" height="14" fill="#7fb0d0"/><path d="M7 5l7 4-7 4z" fill="#fff"/></svg></span>
    <span class="task group"><svg viewBox="0 0 18 22"><path d="M2 3h9l4 4v13l-9-2H2z" fill="#e8cf7a"/><path d="M6 5h8v15l-8-2z" fill="#f6e7a8"/></svg>Inkscape</span>
    <span class="quick ie"><svg viewBox="0 0 24 24"><path d="M5 13h14c0-4-3-7-7-7s-7 3-7 7 3 8 7 8c3 0 5-1 6-3" fill="none" stroke="#2f8fe0" stroke-width="3.600"/><path d="M2 20C2 12 12 2 21 2c2 1 1 6-1 9" fill="none" stroke="#e8b92f" stroke-width="1.400"/></svg></span>
    <span class="quick opera"><svg viewBox="0 0 24 24"><ellipse cx="12" cy="12" rx="8" ry="10" fill="none" stroke="#d6201f" stroke-width="5"/></svg></span>
    <span class="quick chrome"><i></i></span>
    <span class="task active"><svg viewBox="0 0 20 20"><path d="M10 1l9 9-5 2v3l-2-1-2 3-2-4H4L1 10z" fill="#1a1a1a"/><path d="M7 6l3-3 3 3z" fill="#eee"/></svg>New document 3 ...</span>
    <span class="task"><svg viewBox="0 0 20 20"><path d="M3 3l11-2 4 14-11 3z" fill="#8fc4e6"/><path d="M6 5l8-1 2 9-7 2z" fill="#d9eef9"/></svg>Untitled - Notepad</span>
    <span class="task"><svg viewBox="0 0 20 20"><circle cx="10" cy="10" r="9" fill="#e2711d"/><circle cx="11" cy="9" r="5.500" fill="#2d5fa8"/><path d="M2 7c1 7 6 11 12 9" fill="none" stroke="#f4b23a" stroke-width="2"/></svg>Inkscape. Draw Fr...</span>
    <span class="task"><svg viewBox="0 0 20 20"><rect x="1" y="3" width="18" height="14" fill="#dfe9f2" stroke="#7fa5c4"/><rect x="3" y="5" width="14" height="8" fill="#4f9dd4"/><path d="M3 13l6-3 8 3z" fill="#cfe3c0"/></svg>flag-european-un...</span>
    <div class="tray">
      <span class="lang">EN</span>
      <svg viewBox="0 0 14 14"><circle cx="7" cy="7" r="6" fill="#a9c4e4"/><path d="M2 9l10-4" stroke="#ddd" stroke-width="2"/></svg>
      <svg viewBox="0 0 14 14"><rect x="3" y="1" width="8" height="12" fill="#a6cf3e"/><path d="M4 9h6" stroke="#456"/></svg>
      <svg viewBox="0 0 14 14"><circle cx="5" cy="9" r="3" fill="#c25a78"/><circle cx="10" cy="5" r="3" fill="#d88aa0"/></svg>
      <svg viewBox="0 0 14 14"><path d="M7 1l3 6 3 1-1 5H2L1 8l3-1z" fill="#d9861f"/></svg>
      <svg viewBox="0 0 14 14"><rect x="1" y="1" width="12" height="12" fill="#7d8a94"/><path d="M3 4v6M8 4v6h3" stroke="#eee"/></svg>
      <svg viewBox="0 0 14 14"><path d="M1 4l3-2 3 2 3-2 3 2-3 2 3 2-3 2-3-2-3 2-3-2 3-2z" fill="#5ea9e6"/></svg>
      <svg viewBox="0 0 14 14"><circle cx="9" cy="9" r="4.500" fill="#eee" stroke="#222"/><circle cx="9" cy="9" r="1.500" fill="#222"/><path d="M1 2l5 4" stroke="#c33" stroke-width="2"/></svg>
      <svg viewBox="0 0 14 14"><rect x="1" y="2" width="12" height="10" fill="#c02020"/><path d="M4 10V5l3 3 3-3v5" fill="none" stroke="#fff"/></svg>
      <svg viewBox="0 0 14 14"><circle cx="7" cy="7" r="6" fill="#d98a2b"/><circle cx="7" cy="7" r="2.500" fill="#f7e3b8"/></svg>
      <svg viewBox="0 0 14 14"><rect x="2" y="1" width="6" height="8" fill="#9a9a9a"/><circle cx="9" cy="10" r="4" fill="#45a745"/></svg>
      <svg viewBox="0 0 14 14"><path d="M2 5h3l5-4v12L5 9H2z" fill="#bd6a4c"/></svg>
      <svg viewBox="0 0 14 14"><path d="M1 5h3l4-4v12L4 9H1z" fill="#e8e8e8"/><path d="M10 4c2 2 2 4 0 6" fill="none" stroke="#cde" stroke-width="1.200"/></svg>
      <svg viewBox="0 0 14 14"><path d="M3 13V2h6c3 0 3 5 0 5l3 6M3 7h6" fill="none" stroke="#5b6fe0" stroke-width="2"/><path d="M1 10l12-2" stroke="#e44"/></svg>
      <svg viewBox="0 0 14 14"><path d="M3 1v12" stroke="#eee" stroke-width="1.400"/><path d="M4 2h8L9.500 5 12 8H4z" fill="#eee"/></svg>
      <svg viewBox="0 0 14 14"><path d="M2 4h9v8H2z" fill="none" stroke="#eee" stroke-width="1.300"/><path d="M5 1v5" stroke="#eee" stroke-width="1.300"/></svg>
      <span class="clock">12:46 PM<br>12/03/2013</span>
      <span class="show-desk"></span>
    </div>
  </div>
</div>
</body>
</html>
```
FILE: styles.css
```css
/* General Styles */
html, body {
  margin: 0;
  padding: 0;
  background: #000;
}

body {
  font-family: "Liberation Sans", Arial, sans-serif;
  font-size: 8.5px;
  color: #4a4a4a;
}

.defs {
  position: absolute;
}

.app {
  width: 1280px;
  height: 720px;
  display: flex;
  flex-direction: column;
  overflow: hidden;
  background: #f0f0f0;
  filter: blur(.3px);
}

i, em, label {
  font-style: normal;
  font-weight: normal;
}

/* Title Bar */
.titlebar {
  height: 13px;
  display: flex;
  align-items: center;
  gap: 3px;
  padding-left: 1px;
  font-size: 8.5px;
  color: #3c3c3c;
  background: linear-gradient(90deg, #7b7b7b 0, #777 112px, #1c2027 128px, #0d1420 300px, #0c2038 560px, #0a1320 760px, #0d1016 100%);
  border-bottom: 1px solid #888;
  flex: none;
}

.title-ico {
  width: 11px;
  height: 11px;
}

/* Menu Bar */
.menubar {
  height: 15px;
  display: flex;
  align-items: center;
  gap: 7.300px;
  padding-left: 5px;
  font-size: 8.5px;
  color: #55565c;
  background: linear-gradient(#eef0f7, #e2e6f2);
  flex: none;
}

/* Tool Bars */
.cmdbar, .ctrlbar {
  display: flex;
  align-items: center;
  padding-left: 2px;
  background: linear-gradient(#eaedf6, #d9deee);
  border-top: 1px solid #f9fafd;
  flex: none;
}

.cmdbar {
  height: 19px;
}

.ctrlbar {
  height: 26px;
}

.ctrlbar .num {
  font-size: 7.200px;
}

.ic {
  width: 13px;
  height: 13px;
  flex: none;
  padding: 0 2.100px;
}

.sep {
  flex: none;
  width: 1px;
  height: 15px;
  margin: 0 3.700px;
  background: #c3c7d3;
}

.big-t {
  width: 17.200px;
  text-align: center;
  font: bold 15px "Liberation Serif", serif;
  color: #1b1b1b;
  flex: none;
}

.coord {
  font-size: 8px;
  color: #777;
}

.x-label {
  margin: 0 3px 0 5px;
}

.y-label {
  margin: 0 3px 0 6px;
}

.w-label {
  margin: 0 3px 0 8px;
}

.h-label {
  margin: 0 2px 0 7px;
}

.num {
  height: 12px;
  line-height: 12px;
  display: inline-block;
  flex: none;
  box-sizing: content-box;
  padding-left: 2px;
  background: #fff;
  font-size: 8px;
  color: #555;
  white-space: nowrap;
}

.w18 { width: 14px; padding-left: 1px; border: 1px solid #ddd; }
.w26 { width: 23px; }
.w28 { width: 26px; border: 1px solid #ccc; }
.w30 { width: 27px; }
.w36 { width: 33px; border: 1px solid #ddd; }

.spin {
  flex: none;
  width: 6px;
  height: 12px;
  display: flex;
  flex-direction: column;
  align-items: center;
  justify-content: space-around;
  background: linear-gradient(#eeeef2, #dadbe1);
  border: 1px solid #e4e4ea;
  box-sizing: border-box;
}

.spin::before, .spin::after {
  content: "";
  border: 2px solid transparent;
}

.spin::before {
  border-top: 0;
  border-bottom-color: #777;
}

.spin::after {
  border-bottom: 0;
  border-top-color: #777;
}

.select {
  display: flex;
  align-items: stretch;
  height: 12px;
  background: #fff;
  font-size: 8px;
  color: #555;
  line-height: 12px;
  flex: none;
}

.select em {
  flex: 1;
  padding-left: 2px;
}

.arrow {
  width: 10px;
  flex: none;
  border: 1px solid #8a8a8a;
  box-sizing: border-box;
  background:
    linear-gradient(45deg, transparent 50%, #222 50%) 1.500px 3px / 3px 3px no-repeat,
    linear-gradient(-45deg, transparent 50%, #222 50%) 4.500px 3px / 3px 3px no-repeat,
    #e4e4e6;
}

.px {
  width: 28px;
  margin-left: 3px;
}

.affect {
  font-size: 8px;
  color: #707070;
  margin: 0 6px 0 4px;
}

.toggle {
  width: 17px;
  height: 22px;
  box-sizing: border-box;
  border: 1px solid #8f949f;
  background: #c6ccdc;
  display: flex;
  align-items: center;
  justify-content: center;
  flex: none;
}

.toggle .ic {
  padding: 0;
}

.lock {
  margin-left: 1px;
}

/* Main Area */
.main {
  height: 574px;
  display: flex;
  flex: none;
  background: #f0f0f0;
}

.tools {
  width: 22px;
  flex: none;
  display: flex;
  flex-direction: column;
  align-items: center;
  background: #d9dff0;
  padding-top: 1px;
  box-sizing: border-box;
}

.tool {
  width: 20px;
  height: 20px;
  flex: none;
  box-sizing: border-box;
  display: flex;
  align-items: center;
  justify-content: center;
  border: 1px solid transparent;
}

.tool svg {
  width: 16px;
  height: 16px;
}

.tool.active {
  background: #c4c9d6;
  border-color: #868b97;
  border-radius: 2px;
}

.workspace {
  width: 1011px;
  flex: none;
  display: grid;
  grid-template-columns: 12px 985px 14px;
  grid-template-rows: 11px 547px 16px;
}

/* Rulers */
.corner {
  background: #f0f0f0;
}

.ruler-h {
  position: relative;
  display: flex;
  overflow: hidden;
  background:
    repeating-linear-gradient(90deg, #8a8a8a 0 1px, transparent 1px 4.680px) 0 100% / 100% 2px no-repeat,
    #f0f0ee;
}

.ruler-h span {
  width: 46.800px;
  flex: none;
  box-sizing: border-box;
  padding: 1px 0 0 2px;
  font-size: 5.500px;
  line-height: 6px;
  color: #666;
  border-left: 1px solid #888;
}

.mark-h {
  position: absolute;
  left: 484px;
  bottom: 1px;
  border: 3px solid transparent;
  border-top: 4px solid #111;
  border-bottom: 0;
}

.vscroll-top {
  display: flex;
  align-items: center;
  justify-content: center;
  background: #f0f0f0;
}

.vscroll-top b {
  width: 6px;
  height: 6px;
  border: 1px solid #777;
  border-radius: 50%;
}

.ruler-v {
  position: relative;
  overflow: hidden;
  display: flex;
  flex-direction: column;
  padding-top: 11px;
  box-sizing: border-box;
  background:
    repeating-linear-gradient(#8a8a8a 0 1px, transparent 1px 4.680px) 100% 0 / 2px 100% no-repeat,
    #f0f0ee;
}

.ruler-v span {
  height: 46.800px;
  flex: none;
  box-sizing: border-box;
  border-top: 1px solid #888;
  writing-mode: vertical-rl;
  transform: rotate(180deg);
  text-align: left;
  font-size: 5.500px;
  line-height: 8px;
  color: #666;
  padding-bottom: 0;
}

.mark-v {
  position: absolute;
  right: 1px;
  top: 177px;
  border: 3px solid transparent;
  border-left: 4px solid #111;
  border-right: 0;
}

/* Canvas */
.canvas {
  background: #003399;
  overflow: hidden;
}

.page {
  display: block;
}

.vscroll {
  background: #f0f0f0;
  padding-top: 246px;
  box-sizing: border-box;
  display: flex;
  justify-content: center;
}

.vscroll b {
  width: 9px;
  height: 44px;
  box-sizing: border-box;
  border: 1px solid #b8b8b8;
  background:
    linear-gradient(#888, #888) center calc(50% - 2px) / 5px 1px no-repeat,
    linear-gradient(#888, #888) center 50% / 5px 1px no-repeat,
    linear-gradient(#888, #888) center calc(50% + 2px) / 5px 1px no-repeat,
    linear-gradient(90deg, #f2f2f2, #d4d4d4);
}

.hscroll-corner {
  background: #f0f0f0;
}

.hscroll {
  display: flex;
  align-items: center;
  background: #f0f0f0;
  position: relative;
}

.arr-l, .arr-r {
  flex: none;
  border: 3px solid transparent;
}

.arr-l {
  border-right: 3px solid #555;
  border-left: 0;
}

.arr-r {
  border-left: 3px solid #555;
  border-right: 0;
}

.thumb {
  display: flex;
  align-items: center;
  justify-content: center;
  height: 9px;
  box-sizing: border-box;
  border: 1px solid #b8b8b8;
  border-radius: 1px;
  background: linear-gradient(#f2f2f2, #c9c9c9);
}

.thumb em {
  width: 5px;
  height: 5px;
  background: repeating-linear-gradient(90deg, #777 0 1px, transparent 1px 2px);
}

.hscroll .arr-l {
  margin-left: 2px;
}

.hscroll .thumb {
  width: 87px;
  margin-left: 370px;
}

.hscroll .arr-r {
  margin-left: auto;
  margin-right: 3px;
}

.cms {
  background: #f0f0f0;
  display: flex;
  align-items: center;
  justify-content: center;
}

.cms svg {
  width: 12px;
  height: 12px;
}

/* Dock */
.dock {
  width: 227px;
  flex: none;
  display: flex;
  box-sizing: border-box;
  padding-left: 5px;
  background: #f0f0f0;
  overflow: hidden;
}

.dock-inner {
  width: 212px;
  flex: none;
  border-left: 1px solid #9d9d9d;
  box-sizing: border-box;
  background: #f0f0f0;
  overflow: hidden;
}

.dock-head {
  height: 14px;
  margin-top: 1px;
  display: flex;
  align-items: center;
  font-size: 8.5px;
  color: #4c4c4c;
  background: linear-gradient(#dcdcdc, #cbcbcb);
  padding-right: 5px;
}

.head-ic {
  width: 11px;
  height: 11px;
  margin: 0 0 0 2px;
  flex: none;
}

.dock-head span {
  flex: 1;
}

.hbtn {
  width: 9px;
  height: 9px;
  margin-left: 6px;
  box-sizing: border-box;
  border: 1px solid #8c8c8c;
  background: #e7e7e7;
  font-size: 7px;
  line-height: 7px;
  text-align: center;
  color: #333;
}

.tabs {
  display: flex;
  align-items: flex-end;
}

.tabs span {
  padding: 0 2px;
  height: 12px;
  line-height: 12px;
  border: 1px solid #c4c4c4;
  border-bottom: 0;
  margin-right: -1px;
  background: linear-gradient(#f0f0f0, #dcdcdc);
  white-space: nowrap;
  color: #555;
  display: flex;
  align-items: center;
}

.tabs .on {
  height: 14px;
  background: #fff;
  position: relative;
}

.tr-tabs {
  height: 19px;
  padding-left: 5px;
}

.note {
  background: #fff;
  border: 1px solid #b4b4b4;
  margin-left: 3px;
  width: 200px;
  box-sizing: border-box;
}

.tr-note {
  height: 56px;
  padding: 3px 0 0 2px;
}

.row {
  display: flex;
  align-items: center;
}

.dic {
  width: 18px;
  height: 18px;
  flex: none;
}

.lbl {
  margin: 0 6px 0 2px;
}

.deg {
  width: 34px;
  margin-left: 5px;
  border: 1px solid #ddd;
  box-sizing: border-box;
}

.deg .arrow {
  height: 10px;
}

.check-row {
  height: 15px;
  display: flex;
  align-items: center;
  gap: 3px;
  padding-left: 4px;
}

.check {
  width: 9px;
  height: 9px;
  flex: none;
  box-sizing: border-box;
  border: 1px solid #a8a8a8;
  background: linear-gradient(135deg, #e4e4e4, #fafafa);
}

.btn-row {
  display: flex;
  justify-content: flex-end;
  gap: 6px;
  padding-right: 11px;
  margin-top: 3px;
}

.btn {
  width: 55px;
  height: 17px;
  box-sizing: border-box;
  border: 1px solid #a6a6a6;
  border-radius: 2px;
  background: linear-gradient(#f4f4f4 45%, #d4d4d4);
  text-align: center;
  line-height: 15px;
  color: #555;
}

.head-2 {
  margin-top: 9px;
}

.head-3 {
  margin-top: 7px;
}

/* Align frames */
.frame {
  margin: 0 0 0 3px;
  width: 200px;
  box-sizing: border-box;
  border: 1px solid #d2d2d2;
  padding: 0;
  min-width: 0;
}

.frame legend {
  padding: 0;
  margin-left: 3px;
  line-height: 9px;
  height: 9px;
  color: #555;
}

.f-align {
  height: 82px;
  margin-top: 6px;
}

.rel-row {
  display: flex;
  align-items: center;
  height: 12px;
  margin-top: 1px;
  padding-left: 20px;
}

.rel-row > span:first-child {
  width: 61px;
}

.rel {
  width: 118px;
  border: 0;
}

.treat-row {
  display: flex;
  align-items: center;
  height: 13px;
  padding-left: 25px;
}

.treat-row span {
  width: 115px;
}

.grid6 {
  display: grid;
  grid-template-columns: repeat(6, 18px);
  grid-auto-rows: 22px;
  column-gap: 5px;
  align-items: center;
  padding: 2px 0 0 2px;
}

.frame svg:not(.dic) {
  width: 17px;
  height: 17px;
}

.gly {
  font: bold 13px/14px "Liberation Serif", serif;
  color: #222;
  text-align: center;
}

.gly.red {
  color: #7a2030;
}

.f-dist {
  height: 77px;
  margin-top: 5px;
}

.grid5 {
  display: grid;
  grid-template-columns: repeat(5, 18px);
  grid-auto-rows: 23px;
  column-gap: 4.700px;
  align-items: center;
  margin-top: -1px;
  padding: 0 0 0 26px;
}

.dist-last {
  display: flex;
  margin-top: 3px;
  padding-left: 48px;
  gap: 27px;
}

.f-over {
  height: 33px;
  margin-top: 4px;
}

.ovl-row {
  padding: 3px 0 0 1px;
}

.ovl-row > span:not(.num):not(.spin) {
  margin: 0 1px;
}

.ovl-row .num {
  border: 1px solid #ddd;
  width: 28px;
}

.ovl-row .dic {
  margin-left: 8px;
}

.f-conn {
  height: 32px;
  margin-top: 4px;
  padding: 1px 0 0 3px;
}

.f-nodes {
  height: 32px;
  margin-top: 5px;
}

.node-row {
  display: flex;
  gap: 6.500px;
  padding: 1px 0 0 3px;
}

/* Fill and Stroke */
.fs-tabs {
  height: 21px;
  padding-left: 5px;
  align-items: flex-end;
}

.fs-tabs span {
  height: 14px;
}

.fs-tabs .on {
  height: 16px;
}

.mini {
  display: inline-block;
  width: 10px;
  height: 10px;
  margin-right: 2px;
}

.mini.fill {
  background: linear-gradient(135deg, #a9c1e0, #fff);
}

.mini.stroke {
  border: 1px solid #a0a0a0;
  box-sizing: border-box;
  background: #f4f4f4;
}

.mini.style {
  background: repeating-linear-gradient(#222 0 1px, transparent 1px 3px);
}

.fs-note {
  height: 120px;
  width: 199px;
  padding: 3px 4px 0 8px;
}

.paint-row {
  display: flex;
  align-items: center;
  height: 20px;
}

.p-none {
  width: 15px;
  font: bold 15px/15px "Liberation Sans", sans-serif;
  color: #111;
  text-align: center;
  margin-right: 3px;
}

.pt {
  width: 19px;
  height: 19px;
  margin-right: 1px;
  flex: none;
  box-sizing: border-box;
  display: flex;
  align-items: center;
  justify-content: center;
  border: 1px solid transparent;
}

.pt i {
  width: 13px;
  height: 13px;
  box-sizing: border-box;
  border: 1px solid #8a8a8a;
}

.pt.sel {
  background: #d9d9d9;
  border-color: #a0a0a0;
  border-radius: 2px;
}

.p-flat { background: #8fb3d9; }
.p-lin { background: linear-gradient(90deg, #b7cbe4, #fff); }
.p-rad { background: radial-gradient(#fff, #8fb3d9); }
.p-pat { background: repeating-conic-gradient(#9dbbdc 0 25%, #fff 0 50%) 0 0 / 6px 6px; }
.p-swatch { background: linear-gradient(135deg, #fff 40%, #ddd); border: 2px solid #666 !important; }

.p-q {
  width: 19px;
  font: bold 14px/14px "Liberation Sans", sans-serif;
  color: #111;
  text-align: center;
}

.rule-ic {
  width: 19px;
  height: 19px;
  box-sizing: border-box;
  border: 1px solid transparent;
  flex: none;
  padding: 1px;
}

.p-q + .rule-ic {
  margin-left: 14px;
}

.rule-ic.sel {
  background: #d9d9d9;
  border-color: #a0a0a0;
  border-radius: 2px;
}

.flat-title {
  margin: 5px 0 0 -3px;
  height: 9px;
  line-height: 9px;
  color: #666;
  border-bottom: 1px solid #e4e4e4;
}

.color-tabs {
  height: 15px;
  margin: 1px 0 0 -3px;
}

.color-tabs span {
  height: 13px;
  padding: 0 3.500px;
  background: linear-gradient(#eee, #dcdcdc);
}

.color-tabs .on {
  height: 15px;
}

.slider-row {
  display: flex;
  align-items: center;
  height: 18px;
  margin-left: -3px;
  padding-left: 5px;
  border-left: 1px solid #ddd;
}

.slider-row:nth-of-type(n) u {
  width: 9px;
  color: #666;
}

.slider {
  position: relative;
  width: 128px;
  height: 13px;
  margin: 0 6px 0 1px;
  flex: none;
  box-sizing: border-box;
  border: 1px solid #555;
  border-width: 1px 0 0;
}

.slider i {
  position: absolute;
  top: -1px;
  width: 4px;
  height: 4px;
  margin-left: -2px;
  border-radius: 50%;
  background: #111;
}

.s-r { background: linear-gradient(90deg, #0000a0, #ff00a0); }
.s-g { background: linear-gradient(90deg, #d300a0, #d3ffa0); }
.s-b { background: linear-gradient(90deg, #d30000, #d300ff); }

.slider-row .num {
  border: 1px solid #ddd;
}

.dock-scroll {
  width: 10px;
  flex: none;
  display: flex;
  justify-content: center;
  background: #f0f0f0;
  padding-top: 14px;
}

.dock-scroll b {
  display: block;
  width: 9px;
  height: 435px;
  box-sizing: border-box;
  border: 1px solid #bcbcbc;
  background: linear-gradient(90deg, #f2f2f2, #d8d8d8);
}

/* Snap Bar */
.snapbar {
  width: 20px;
  flex: none;
  display: flex;
  flex-direction: column;
  align-items: center;
  background: #d6dcef;
  box-sizing: border-box;
}

.snap {
  width: 17px;
  height: 17px;
  margin-bottom: .6px;
  flex: none;
  box-sizing: border-box;
  display: flex;
  align-items: center;
  justify-content: center;
  border: 1px solid transparent;
}

.snap svg {
  width: 13px;
  height: 13px;
}

.snap.on {
  background: #c7cedf;
  border-color: #8e96a8;
  border-radius: 2px;
}

.snap-sep {
  height: 1px;
  width: 14px;
  background: #c3c9dc;
  margin: 3px 0 2.400px;
  flex: none;
}

.snap-sep.wide {
  margin: 7px 0 6.400px;
}

/* Palette */
.palette {
  height: 13px;
  flex: none;
  display: flex;
  background: #f0f0f0;
}

.no-paint {
  width: 13px;
  flex: none;
  box-sizing: border-box;
  background: #eee;
}

.no-paint svg {
  display: block;
  width: 13px;
  height: 13px;
}

.swatches {
  width: 1256px;
  flex: none;
  display: flex;
}

.swatches i {
  flex: 1;
}

.pal-arrow {
  margin: 1px 0 0 3px;
  border: 3px solid transparent;
  border-right: 3px solid #222;
  border-left: 0;
  height: 0;
}

.pal-scroll {
  height: 12px;
  flex: none;
  display: flex;
  align-items: center;
  background: #f0f0f0;
}

.pal-scroll .arr-l {
  margin-left: 3px;
}

.pal-scroll .thumb {
  width: 321px;
  margin-left: 7px;
  height: 10px;
}

.pal-scroll .arr-r {
  margin-left: auto;
  margin-right: 12px;
}

/* Status Bar */
.status {
  height: 19px;
  flex: none;
  display: flex;
  align-items: center;
  padding-right: 15px;
  background: #f0f0f0;
  font-size: 8px;
}

.fs-labels {
  width: 28px;
  flex: none;
  padding-left: 2px;
  box-sizing: border-box;
  display: flex;
  flex-direction: column;
  line-height: 9.500px;
  color: #555;
}

.fs-swatch {
  width: 53px;
  height: 19px;
  flex: none;
  display: flex;
  flex-direction: column;
}

.sw-fill {
  height: 10px;
  background: #d300a0;
}

.sw-stroke {
  height: 9px;
  display: flex;
}

.sw-stroke i {
  flex: 1;
  background: #d300a0;
}

.sw-stroke span {
  width: 6px;
  line-height: 10px;
  color: #333;
  font-size: 7px;
}

.op {
  margin: 0 1px 0 3px;
  color: #777;
}

.sep.tall {
  height: 19px;
  margin: 0 1px 0 2px;
}

.st-ic {
  width: 12px;
  height: 12px;
  flex: none;
  margin-right: 2.500px;
}

.layer {
  width: 33px;
  height: 18px;
  line-height: 18px;
  flex: none;
  box-sizing: border-box;
  margin: 0 1px 0 1px;
  background: #fff;
  font-size: 6.500px;
  font-weight: bold;
  color: #444;
  padding-left: 2px;
  white-space: nowrap;
}

.layer-arrow {
  width: 11px;
  height: 18px;
  flex: none;
  box-sizing: border-box;
  border: 1px solid #999;
  background: linear-gradient(#e8e8e8, #cfcfcf);
  display: flex;
  align-items: center;
  justify-content: center;
}

.layer-arrow s {
  border: 3px solid transparent;
  border-top: 3px solid #222;
  border-bottom: 0;
}

.msg {
  flex: 1;
  margin: 0 0 0 3px;
  white-space: nowrap;
  color: #555;
  font-size: 8px;
}

.msg b {
  color: #333;
}

.coords {
  width: 46px;
  flex: none;
  height: 19px;
  display: grid;
  grid-template-columns: 11px 1fr;
  border-left: 1px solid #aaa;
  padding-left: 2px;
  box-sizing: border-box;
  font: 8px/9.500px "Liberation Mono", monospace;
  color: #666;
}

.cv {
  white-space: nowrap;
}

.zlabel {
  margin: 0 1px 0 1px;
  color: #777;
}

/* Taskbar */
.taskbar {
  height: 26px;
  flex: none;
  display: flex;
  align-items: center;
  background: linear-gradient(90deg, #12161e, #0c1626 40%, #101a2b 70%, #0a1018);
  border-top: 1px solid #5b6570;
  box-sizing: border-box;
  color: #dfe4ea;
  font-size: 8.300px;
}

.orb {
  width: 24px;
  height: 24px;
  margin: 0 17px 0 6px;
  flex: none;
  border-radius: 50%;
  border: 1px solid #5e7488;
  box-sizing: border-box;
  background:
    radial-gradient(circle at 38% 36%, #e8603c 0 18%, transparent 19%),
    radial-gradient(circle at 62% 36%, #7fc24a 0 18%, transparent 19%),
    radial-gradient(circle at 38% 62%, #3f8fd4 0 18%, transparent 19%),
    radial-gradient(circle at 62% 62%, #f0c33c 0 18%, transparent 19%),
    radial-gradient(#3e7eb4, #17374f);
}

.quick {
  width: 20px;
  height: 24px;
  flex: none;
  display: flex;
  align-items: center;
  justify-content: center;
}

.quick svg {
  width: 20px;
  height: 20px;
}

.task {
  width: 105px;
  height: 24px;
  flex: none;
  box-sizing: border-box;
  margin-right: 3px;
  padding-left: 5px;
  display: flex;
  align-items: center;
  gap: 6px;
  border: 1px solid #3c4653;
  border-radius: 2px;
  background: linear-gradient(#2a3240, #1a212c 50%, #121821);
  white-space: nowrap;
}

.task svg {
  width: 18px;
  height: 18px;
  flex: none;
}

.task.group {
  margin: 0 11px 0 15px;
}

.task.group svg {
  height: 22px;
}

.task.active {
  margin-left: 12px;
  background: linear-gradient(#6a6f78, #50555e 50%, #41464f);
  border-color: #888d96;
}

.opera {
  margin: 0 21px 0 22px;
}

.chrome i {
  display: block;
  width: 19px;
  height: 19px;
  border-radius: 50%;
  background:
    radial-gradient(#4f8be8 0 27%, #fff 28% 37%, transparent 38%),
    conic-gradient(from 30deg, #e5412f 0 120deg, #f2c21f 120deg 240deg, #3fa64a 240deg);
}

.tray {
  margin-left: auto;
  display: flex;
  align-items: center;
  height: 100%;
}

.tray svg {
  width: 12px;
  height: 12px;
  margin-right: 4px;
  flex: none;
}

.lang {
  font-size: 8.500px;
  margin-right: 9.500px;
  color: #cfd6de;
  margin-top: -4px;
}

.clock {
  width: 42px;
  margin-left: 3px;
  text-align: center;
  line-height: 12px;
  font-size: 8.500px;
  color: #dfe4ea;
}

.show-desk {
  width: 8px;
  height: 100%;
  margin-left: 6px;
  background: linear-gradient(90deg, #3a3f47, #1c2129);
}
```
